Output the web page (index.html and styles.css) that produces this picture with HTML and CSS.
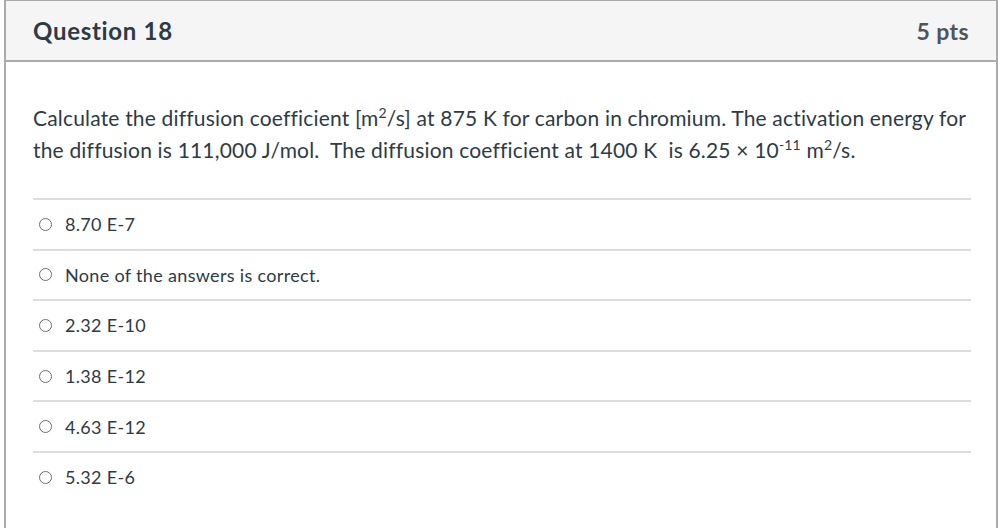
FILE: index.html
```html
<!DOCTYPE html>
<html>
<head>
<meta charset="utf-8">
<link rel="stylesheet" href="styles.css">
</head>
<body>
<div class="card">
  <div class="header">
    <div class="title">Question 18</div>
    <div class="pts">5 pts</div>
  </div>
  <div class="body">
    <p class="question">Calculate the diffusion coefficient [m<sup>2</sup>/s] at 875 K for carbon in chromium. The activation energy for the diffusion is 111,000 J/mol.&nbsp; The diffusion coefficient at 1400 K&nbsp; is 6.25 × 10<sup>-11</sup> m<sup>2</sup>/s.</p>
    <div class="answers">
      <div class="answer"><span class="radio"></span><span>8.70 E-7</span></div>
      <div class="answer"><span class="radio"></span><span>None of the answers is correct.</span></div>
      <div class="answer"><span class="radio"></span><span>2.32 E-10</span></div>
      <div class="answer"><span class="radio"></span><span>1.38 E-12</span></div>
      <div class="answer"><span class="radio"></span><span>4.63 E-12</span></div>
      <div class="answer"><span class="radio"></span><span>5.32 E-6</span></div>
    </div>
  </div>
</div>
</body>
</html>
```
FILE: styles.css
```css
html, body {
  margin: 0;
  padding: 0;
  background: #fff;
}
body {
  padding-left: 4px;
  font-family: Lato, "Noto Sans", sans-serif;
  color: #2d3b45;
}
.card {
  width: 990px;
  margin-top: -1px;
  border: 2px solid #aaaaaa;
  height: 540px;
}
.header {
  height: 59px;
  background: #f5f5f5;
  border-bottom: 2px solid #aaaaaa;
  display: flex;
  align-items: center;
  justify-content: space-between;
  padding: 0 27px 0 27px;
}
.title {
  font-size: 24px;
  font-weight: 700;
  letter-spacing: 0.7px;
  color: #2d3b45;
}
.pts {
  font-size: 23px;
  font-weight: 700;
  letter-spacing: 0.4px;
  color: #4f5459;
}
.body {
  padding: 0 25px 0 27px;
}
.question {
  margin: 0;
  padding-top: 40px;
  font-size: 21px;
  letter-spacing: 0.18px;
  line-height: 32px;
  color: #2d3b45;
  height: 96px;
}
.question sup {
  font-size: 14px;
  line-height: 0;
  vertical-align: 8px;
}
.answers {
  display: flex;
  flex-direction: column;
}
.answer {
  border-top: 2px solid #dddddd;
  height: 48.6px;
  display: flex;
  align-items: center;
  gap: 13px;
  font-size: 18px;
  letter-spacing: 0.33px;
  color: #2d3b45;
}
.radio {
  width: 11px;
  height: 11px;
  border: 1.7px solid #6e6e6e;
  border-radius: 50%;
  margin-left: 6px;
  flex: none;
}
```
